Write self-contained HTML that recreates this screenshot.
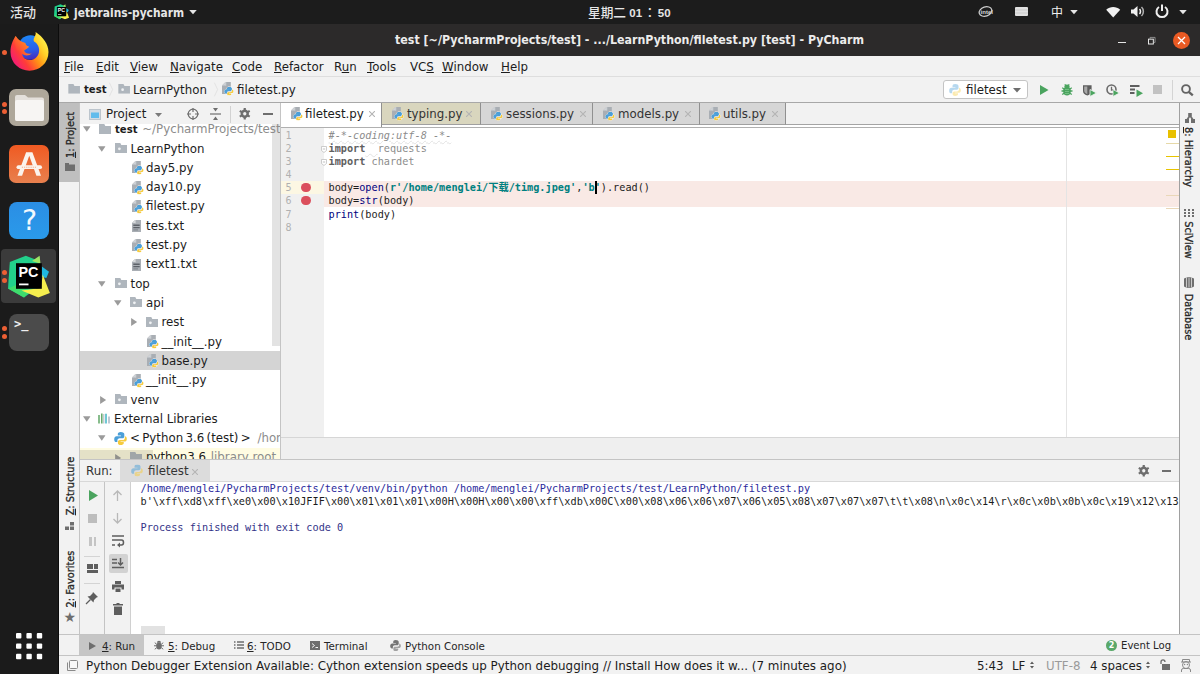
<!DOCTYPE html>
<html><head><meta charset="utf-8"><title>test - PyCharm</title>
<style>
*{box-sizing:border-box;margin:0;padding:0}
html,body{width:1200px;height:674px;overflow:hidden;background:#f2f2f2}
body{position:relative;font-family:"DejaVu Sans","Noto Sans CJK SC",sans-serif;font-size:11.800px;color:#1c1c1c}
div,span,svg{position:absolute}
.t{white-space:nowrap;line-height:16px;height:16px}
.mono{font-family:"DejaVu Sans Mono","Noto Sans CJK SC",monospace;font-size:10.215px;white-space:pre;line-height:13px;height:13px}
.u{text-decoration:underline;text-underline-offset:1px;position:static}
.s{position:static}
svg{overflow:visible}
.g{color:#8c8c8c}
.bc{font-family:'DejaVu Sans Condensed','Liberation Sans',sans-serif;font-weight:bold;font-size:11.200px}
</style></head><body>
<svg width="0" height="0" style="left:0;top:0"><defs>
<symbol id="pylogo" viewBox="2.900 3.600 9.100 9.400"><path d="M7.600 3.600c-1.600 0-2.100.7-2.100 1.600v1h2.300v.4H4.600c-1 0-1.700.8-1.700 2.200 0 1.400.6 2.100 1.500 2.100h.8v-1.200c0-.9.700-1.600 1.600-1.600h2.100c.7 0 1.300-.6 1.300-1.300V5.200c0-.9-.9-1.600-2.600-1.600z" fill="#4b9fd8"/><path d="M10.600 6.600v1.100c0 .9-.7 1.700-1.600 1.700H6.900c-.7 0-1.300.6-1.300 1.300v1c0 .9.800 1.300 1.900 1.300 1.300 0 2.300-.4 2.300-1.300v-.9H7.500v-.4h3.300c.8 0 1.200-.8 1.200-1.900 0-1.100-.5-1.900-1.400-1.900z" fill="#f6cb3c"/></symbol>
<symbol id="py" viewBox="0 0 12 13.500"><path d="M0 3.500L3.500 0H8.800V12H0Z" fill="#a9aeb4"/><path d="M0 3.500L3.500 0V3.500Z" fill="#d0d3d7"/><path d="M3.800 0V3.800" stroke="#e8eaec" stroke-width=".5"/><g transform="translate(2.600 4.900) scale(.967 .904) translate(-2.900 -3.600)"><path d="M7.600 3.600c-1.600 0-2.100.7-2.100 1.600v1h2.300v.4H4.600c-1 0-1.700.8-1.700 2.200 0 1.400.6 2.100 1.500 2.100h.8v-1.200c0-.9.700-1.600 1.600-1.600h2.100c.7 0 1.300-.6 1.300-1.300V5.200c0-.9-.9-1.600-2.600-1.600z" fill="#4b9fd8" stroke="#fff" stroke-width=".9" paint-order="stroke"/><path d="M10.600 6.600v1.100c0 .9-.7 1.700-1.600 1.700H6.900c-.7 0-1.300.6-1.300 1.300v1c0 .9.800 1.300 1.900 1.300 1.300 0 2.300-.4 2.300-1.300v-.9H7.500v-.4h3.300c.8 0 1.200-.8 1.200-1.900 0-1.100-.5-1.900-1.400-1.900z" fill="#f6cb3c" stroke="#fff" stroke-width=".9" paint-order="stroke"/><path d="M7.600 3.600c-1.600 0-2.100.7-2.100 1.600v1h2.300v.4H4.600c-1 0-1.700.8-1.700 2.200 0 1.400.6 2.100 1.500 2.100h.8v-1.200c0-.9.700-1.600 1.600-1.600h2.100c.7 0 1.300-.6 1.300-1.300V5.200c0-.9-.9-1.600-2.600-1.600z" fill="#4b9fd8"/></g></symbol>
<symbol id="fold" viewBox="0 0 12 10"><path d="M0 0H5.300L6.300 2H12V10H0Z" fill="#afb6bd"/></symbol>
<symbol id="foldp" viewBox="0 0 12 10"><path d="M0 0H5.300L6.300 2H12V10H0Z" fill="#afb6bd"/><circle cx="4.400" cy="5.800" r="1.400" fill="#f0f2f4"/></symbol>
<symbol id="pc" viewBox="0 0 43 43"><path d="M1.800 6.900L17.800 .7L31.200 6L33 30L16 42.500L0 33.600Z" fill="#22d08b"/><path d="M0 33.600L16 42.500L22 36L8 30Z" fill="#3fdc6c"/><path d="M24 6L31.600 .7L32.500 8.700Z" fill="#9fe566"/><path d="M33.800 11.400L41 16.700L38.300 23L33.800 22Z" fill="#1fb8e0"/><path d="M34.700 19.400L41.900 38L30.300 42.500L13.400 35.400L33 33Z" fill="#f5ee4e"/><rect x="8" y="8.200" width="25.800" height="25.600" fill="#000"/><text x="10.500" y="22" font-size="14" font-weight="bold" fill="#fff" font-family="Liberation Sans,sans-serif" textLength="20" lengthAdjust="spacingAndGlyphs">PC</text><rect x="11" y="28.500" width="9.500" height="1.800" fill="#fff"/></symbol>
<symbol id="txt" viewBox="0 0 9 12"><path d="M0 3L3 0H9V12H0Z" fill="#a9aeb4"/><path d="M0 3L3 0V3Z" fill="#d4d7da"/><path d="M3.300 0V3.300" stroke="#f0f1f2" stroke-width=".5"/><path d="M1.300 5.300H7.700M1.300 7.600H7.700" stroke="#5c6168" stroke-width="1.400"/><path d="M1.300 9.900H6" stroke="#7c8187" stroke-width="1"/></symbol>
<symbol id="ad" viewBox="0 0 8 6"><path d="M0 0H8L4 6Z" fill="#9b9b9b"/></symbol>
<symbol id="ar" viewBox="0 0 6 8"><path d="M0 0V8L6 4Z" fill="#9b9b9b"/></symbol>
<symbol id="x" viewBox="0 0 6 6"><path d="M0 0L6 6M6 0L0 6" stroke="#b4b4b4" stroke-width="1.100"/></symbol>
</defs></svg>
<div id="topbar" style="left:0;top:0;width:1200px;height:24px;background:#1c1c1c;color:#e6e6e6">
<span class="t" style="left:10px;top:4.500px;font-size:13px;font-weight:500">活动</span>
<svg style="left:54px;top:3.600px" width="15.500" height="15.500"><use href="#pc" width="15.500" height="15.500"/></svg>
<span class="t bc" style="left:74px;top:4.800px;font-size:11.850px;color:#e6e6e6">jetbrains-pycharm</span>
<svg style="left:189px;top:10px" width="8" height="4.200" viewBox="0 0 9 5"><path d="M0 0H9L4.500 5Z" fill="#e6e6e6"/></svg>
<span class="t" style="left:588px;top:4.500px;font-size:12.700px;font-weight:500;color:#e6e6e6;font-family:Liberation Sans,Noto Sans CJK JP,sans-serif">星期二<span class="s" style="font-size:11.500px;font-weight:bold"> 01</span><span class="s" style="font-size:12.700px;margin:0 1.500px">：</span><span class="s" style="font-size:11.500px;font-weight:bold">50</span></span>
<svg style="left:978px;top:5px" width="15" height="13" viewBox="0 0 15 13"><ellipse cx="7.500" cy="6.500" rx="6.500" ry="4.600" fill="none" stroke="#cfcfcf" stroke-width="1.200" transform="rotate(-18 7.500 6.500)"/><text x="2.600" y="8.800" font-size="6" font-weight="bold" fill="#d8d8d8" font-family="Liberation Sans,sans-serif">intel</text></svg>
<svg style="left:1015px;top:7px" width="13" height="9" viewBox="0 0 13 9"><rect width="13" height="9" rx="1" fill="#e0e0e0"/><path d="M0 3H13M0 6H13" stroke="#bdbdbd" stroke-width=".6"/></svg>
<span class="t" style="left:1051px;top:4.500px;font-size:12px;color:#f0f0f0">中</span>
<svg style="left:1069.500px;top:9.500px" width="8" height="4.200" viewBox="0 0 9 5"><path d="M0 0H9L4.500 5Z" fill="#e6e6e6"/></svg>
<svg style="left:1106px;top:7px" width="14.400" height="10.500" viewBox="0 0 16 12"><path d="M0 3.200C4.500 -1 11.500 -1 16 3.200L8 12Z" fill="#f0f0f0"/></svg>
<svg style="left:1131px;top:5px" width="14" height="13" viewBox="0 0 14 13"><path d="M0 4.500H2.500L6.500 1V12L2.500 8.500H0Z" fill="#f0f0f0"/><path d="M8.500 4C9.800 5.200 9.800 7.800 8.500 9" stroke="#f0f0f0" stroke-width="1.600" fill="none"/><path d="M10.500 2C13 4.300 13 8.700 10.500 11" stroke="#b0b0b0" stroke-width="1.500" fill="none"/></svg>
<svg style="left:1155px;top:4px" width="14" height="14" viewBox="0 0 14 14"><path d="M4 3A5.500 5.500 0 1 0 10 3" stroke="#f0f0f0" stroke-width="2" fill="none"/><path d="M7 0.500V7" stroke="#f0f0f0" stroke-width="2"/></svg>
<svg style="left:1178.500px;top:9.500px" width="8" height="4.200" viewBox="0 0 9 5"><path d="M0 0H9L4.500 5Z" fill="#e6e6e6"/></svg>
</div>
<div id="dock" style="left:0;top:24px;width:59px;height:650px;background:#1b1b1b;border-right:1px solid #0c0c0c">
<svg style="left:9.500px;top:8.300px" width="39" height="39" viewBox="0 0 39 39"><defs><linearGradient id="ffg" x1="92%" y1="15%" x2="8%" y2="72%"><stop offset="0" stop-color="#fff44f"/><stop offset=".25" stop-color="#ffd028"/><stop offset=".5" stop-color="#ff9216"/><stop offset=".78" stop-color="#ff3d38"/><stop offset="1" stop-color="#f5206e"/></linearGradient><linearGradient id="ffb" x1="40%" y1="0" x2="60%" y2="100%"><stop offset="0" stop-color="#1d86f5"/><stop offset=".6" stop-color="#2a5ee8"/><stop offset="1" stop-color="#4a28b8"/></linearGradient><linearGradient id="ffh" x1="100%" y1="0" x2="0" y2="100%"><stop offset="0" stop-color="#ffa01e"/><stop offset="1" stop-color="#ff3b3b"/></linearGradient></defs><circle cx="20.500" cy="15.500" r="12.300" fill="url(#ffb)"/><path d="M5.600 4C3 8 .5 13 .5 20A19 18.800 0 0 0 38.500 20C38.500 12 33 5 25.600 0C26.500 4 22.500 6 24 9.500C27.500 11.500 29.800 15.500 29 20C28.200 25 24 28.500 19 28C15 27.500 12.500 25 12.200 22C15 24 19 24 21.800 21.500C18 22.500 14.800 21 14 18.500C15.500 17 17.800 16.500 19 14.800C17 14.500 15.500 13 15.200 11C12 10.500 8.500 8.500 5.600 4Z" fill="url(#ffg)"/><path d="M5.600 4C8.500 8.500 12 10.500 15.200 11C15.500 13 17 14.500 19 14.800C17.800 16.500 15.500 17 14 18.500C12 17 9 17 7 19C5 15 5 8 5.600 4Z" fill="url(#ffh)" opacity=".85"/></svg>
<div style="left:1.700px;top:25.5px;width:5px;height:5px;border-radius:50%;background:#ec5f34"></div>
<div style="left:8.700px;top:65.200px;width:40.400px;height:37px;border-radius:7px;background:#aea79a"></div>
<svg style="left:14.500px;top:71px" width="29" height="26" viewBox="0 0 29 26"><path d="M2 0H10L13 2.500H27Q29 2.500 29 4.500V24Q29 26 27 26H2Q0 26 0 24V2Q0 0 2 0Z" fill="#e4e0db"/><path d="M0 7Q0 5 2 5H27Q29 5 29 7V24Q29 26 27 26H2Q0 26 0 24Z" fill="#f7f5f3"/></svg>
<div style="left:1.700px;top:77.5px;width:5px;height:5px;border-radius:50%;background:#ec5f34"></div>
<div style="left:1.700px;top:84.5px;width:5px;height:5px;border-radius:50%;background:#ec5f34"></div>
<div style="left:8.800px;top:121.300px;width:40.200px;height:37.700px;border-radius:7px;background:linear-gradient(#f05a22,#e8804e)"></div>
<svg style="left:15.800px;top:126px" width="26.500" height="27" viewBox="0 0 27 27"><path d="M10.300 2H16.700L25.500 26H20.800L13.500 5.500L6.200 26H1.500Z" fill="#fbf3ec"/><rect x=".5" y="15.200" width="26" height="4" rx="2" fill="#fbf3ec"/><path d="M6 17.300H21" stroke="#ef8a5c" stroke-width=".7" stroke-dasharray="1.200 1"/></svg>
<div style="left:9px;top:177.800px;width:40px;height:37.300px;border-radius:8px;background:linear-gradient(#2b8ee4,#2a9aea)"></div>
<span class="t" style="left:9.500px;top:180.500px;width:40px;text-align:center;font-size:28.500px;line-height:32px;height:32px;color:#f2f8fd">?</span>
<div style="left:1px;top:225px;width:55px;height:54px;border-radius:4px;background:#3b3b3b"></div>
<svg style="left:8px;top:231px" width="43" height="43"><use href="#pc" width="43" height="43"/></svg>
<div style="left:1.700px;top:245.5px;width:5px;height:5px;border-radius:50%;background:#ec5f34"></div>
<div style="left:1.700px;top:253.5px;width:5px;height:5px;border-radius:50%;background:#ec5f34"></div>
<div style="left:9px;top:290px;width:40px;height:37px;border-radius:8px;background:#4b4b4b"></div>
<span class="t" style="left:14px;top:291.800px;font-size:12px;font-weight:bold;color:#f0f0f0;font-family:'DejaVu Sans Mono',monospace">&gt;_</span>
<div style="left:1.700px;top:301.5px;width:5px;height:5px;border-radius:50%;background:#ec5f34"></div>
<div style="left:1.700px;top:309.5px;width:5px;height:5px;border-radius:50%;background:#ec5f34"></div>
<svg style="left:16px;top:609.200px" width="27" height="27" viewBox="0 0 27 27"><rect x="0.0" y="0.0" width="5.400" height="5.400" rx="1" fill="#fff"/><rect x="10.4" y="0.0" width="5.400" height="5.400" rx="1" fill="#fff"/><rect x="20.8" y="0.0" width="5.400" height="5.400" rx="1" fill="#fff"/><rect x="0.0" y="10.4" width="5.400" height="5.400" rx="1" fill="#fff"/><rect x="10.4" y="10.4" width="5.400" height="5.400" rx="1" fill="#fff"/><rect x="20.8" y="10.4" width="5.400" height="5.400" rx="1" fill="#fff"/><rect x="0.0" y="20.8" width="5.400" height="5.400" rx="1" fill="#fff"/><rect x="10.4" y="20.8" width="5.400" height="5.400" rx="1" fill="#fff"/><rect x="20.8" y="20.8" width="5.400" height="5.400" rx="1" fill="#fff"/></svg>
</div>
<div id="title" style="left:59px;top:24px;width:1141px;height:32px;background:#2c2a2a;color:#f0f0f0">
<span class="t bc" style="left:0;top:8px;width:1141px;text-align:center;font-size:12.300px;color:#ececec">test [~/PycharmProjects/test] - .../LearnPython/filetest.py [test] - PyCharm</span>
<div style="left:1059px;top:17.500px;width:8px;height:1.500px;background:#e6e6e6"></div>
<svg style="left:1088.500px;top:12.500px" width="7.500" height="7.500" viewBox="0 0 9 9"><path d="M2.500 2V.5H8.500V6.500H7" stroke="#9a9a9a" fill="none" stroke-width="1"/><rect x=".6" y="2.600" width="5.800" height="5.800" stroke="#e6e6e6" fill="none" stroke-width="1.200"/></svg>
<div style="left:1114px;top:8px;width:17px;height:17px;border-radius:50%;background:#ea5a23"></div>
<svg style="left:1119px;top:13px" width="7" height="7" viewBox="0 0 7 7"><path d="M0 0L7 7M7 0L0 7" stroke="#fff" stroke-width="1.300"/></svg>
</div>
<div id="menubar" style="left:59px;top:56px;width:1141px;height:20px;background:#f2f2f2">
<span class="t" style="left:5px;top:2.800px;font-size:11.800px"><span class="u">F</span>ile</span><span class="t" style="left:37px;top:2.800px;font-size:11.800px"><span class="u">E</span>dit</span><span class="t" style="left:71px;top:2.800px;font-size:11.800px"><span class="u">V</span>iew</span><span class="t" style="left:111px;top:2.800px;font-size:11.800px"><span class="u">N</span>avigate</span><span class="t" style="left:173px;top:2.800px;font-size:11.800px"><span class="u">C</span>ode</span><span class="t" style="left:215px;top:2.800px;font-size:11.800px"><span class="u">R</span>efactor</span><span class="t" style="left:275px;top:2.800px;font-size:11.800px">R<span class="u">u</span>n</span><span class="t" style="left:308px;top:2.800px;font-size:11.800px"><span class="u">T</span>ools</span><span class="t" style="left:351px;top:2.800px;font-size:11.800px">VC<span class="u">S</span></span><span class="t" style="left:383px;top:2.800px;font-size:11.800px"><span class="u">W</span>indow</span><span class="t" style="left:442px;top:2.800px;font-size:11.800px"><span class="u">H</span>elp</span>
</div>
<div id="navbar" style="left:59px;top:76px;width:1141px;height:27px;background:#f2f2f2;border-top:1px solid #dedede;border-bottom:1px solid #a8a8a8">
<svg style="left:8.7px;top:7.3px" width="12.3" height="9.7" ><use href="#fold" width="12.3" height="9.7"/></svg><span class="t bc" style="left:25px;top:4.800px">test</span><svg style="left:50px;top:5px" width="4" height="15" viewBox="0 0 5 17"><path d="M.5 0L4.500 8.500L.5 17" stroke="#dedede" fill="none"/></svg><svg style="left:58.7px;top:7.3px" width="12.3" height="9.7" ><use href="#foldp" width="12.3" height="9.7"/></svg><span class="t" style="left:74px;top:4.800px">LearnPython</span><svg style="left:154.500px;top:5px" width="4" height="15" viewBox="0 0 5 17"><path d="M.5 0L4.500 8.500L.5 17" stroke="#dedede" fill="none"/></svg><svg style="left:163px;top:5px" width="12" height="13.5" ><use href="#py" width="12" height="13.5"/></svg><span class="t" style="left:178px;top:4.800px">filetest.py</span><div style="left:883.500px;top:3px;width:85px;height:19px;background:#fff;border:1px solid #c4c4c4;border-radius:3px"></div><svg style="left:889.500px;top:7px;opacity:.4" width="12" height="12" viewBox="0 0 12 12"><use href="#pylogo" width="12" height="12"/></svg><span class="t" style="left:907px;top:4.500px">filetest</span><svg style="left:954px;top:10.500px" width="8" height="4.500" viewBox="0 0 8 4.500"><path d="M0 0H8L4 4.500Z" fill="#6e6e6e"/></svg><svg style="left:981px;top:7.500px" width="8.500" height="10" viewBox="0 0 8.500 10"><path d="M0 0L8.500 5L0 10Z" fill="#4ba45f"/></svg><svg style="left:1001.500px;top:6.500px" width="12" height="11.500" viewBox="0 0 12 11.500"><ellipse cx="6" cy="7" rx="3.900" ry="4.500" fill="#4ba45f"/><path d="M3.300 3.200A2.700 2.700 0 0 1 8.700 3.200Z" fill="#4ba45f"/><path d="M.5 7H11.500M1.200 3.800L3.500 5.200M10.800 3.800L8.500 5.200M1.200 10.500L3.500 9M10.800 10.500L8.500 9M3.800 .3L4.800 1.600M8.200 .3L7.200 1.600" stroke="#4ba45f" stroke-width="1.300"/><path d="M4 5.500H8M4 7.500H8M4 9.500H8" stroke="#8fd09c" stroke-width=".6"/></svg><svg style="left:1024px;top:7.500px" width="14" height="12" viewBox="0 0 14 12"><path d="M0 .3H8.600V6Q8.600 9 4.300 10.500Q0 9 0 6Z" fill="#5e5e5e"/><path d="M4.300 1.500V9.200Q1.200 8 1.200 6V1.500Z" fill="#a8a8a8"/><path d="M7 4.500L13.500 8L7 11.500Z" fill="#4ba45f" stroke="#f2f2f2" stroke-width=".8"/></svg><svg style="left:1046.500px;top:6.500px" width="14" height="13" viewBox="0 0 14 13"><circle cx="5.500" cy="5.500" r="4.500" fill="none" stroke="#6a6a6a" stroke-width="1.600"/><path d="M5.500 2.800V6H7.500" stroke="#6a6a6a" fill="none" stroke-width="1.300"/><path d="M7 5.500L13.500 9L7 12.500Z" fill="#4ba45f" stroke="#f2f2f2" stroke-width=".8"/></svg><svg style="left:1071px;top:7.500px" width="13" height="12" viewBox="0 0 13 12"><path d="M0 1H9.500M0 4.500H5M0 8H4.500" stroke="#5e5e5e" stroke-width="1.800"/><path d="M6.500 4.500L13 8.200L6.500 12Z" fill="#4ba45f"/></svg><div style="left:1094px;top:8px;width:9px;height:8.500px;background:#c2c2c2"></div><div style="left:1113px;top:3px;width:1px;height:20px;background:#d4d4d4"></div><svg style="left:1121.500px;top:6.500px" width="12.500" height="12" viewBox="0 0 12.500 12"><circle cx="5" cy="5" r="3.900" fill="none" stroke="#646464" stroke-width="1.900"/><path d="M7.800 7.800L11.800 11.300" stroke="#646464" stroke-width="2.300"/></svg>
</div>
<div id="lstrip" style="left:59px;top:103px;width:21px;height:531px;background:#f2f2f2;border-right:1px solid #c4c4c4">
<div style="left:0;top:0;width:20px;height:79px;background:#bfbfbf"></div><span class="t" style="left:-11.500px;top:23.500px;width:46px;text-align:center;transform:rotate(-90deg);font-size:9.800px;color:#262626;-webkit-text-stroke:.3px #262626"><span class="u">1</span>: Project</span><svg style="left:5.500px;top:60px" width="10" height="8" viewBox="0 0 10 8"><path d="M0 0H4V1.500H10V8H0Z" fill="#6e6e6e"/></svg><span class="t" style="left:-22.500px;top:375px;width:68px;text-align:center;transform:rotate(-90deg);font-size:9.800px;color:#262626;-webkit-text-stroke:.3px #262626"><span class="u">Z</span>: Structure</span><svg style="left:6px;top:419px" width="9" height="8" viewBox="0 0 9 8"><path d="M5 0H9V3.500H5ZM0 4.500H4V8H0ZM5 4.500H9V8H5Z" fill="#6e6e6e"/></svg><span class="t" style="left:-22.500px;top:468px;width:68px;text-align:center;transform:rotate(-90deg);font-size:9.800px;color:#262626;-webkit-text-stroke:.3px #262626"><span class="u">2</span>: Favorites</span><span class="t" style="left:4.500px;top:506px;font-size:14px;color:#6e6e6e;font-family:'DejaVu Sans',sans-serif">★</span>
</div>
<div id="proj" style="left:80px;top:103px;width:200px;height:356px;background:#fff;overflow:hidden">
<div style="left:191.500px;top:21px;width:8.500px;height:221.500px;background:#e3e3e3"></div><svg style="left:2.8px;top:23.30px" width="7.6" height="6" ><use href="#ad" width="7.6" height="6"/></svg><svg style="left:19.0px;top:20.70px" width="12" height="10" ><use href="#fold" width="12" height="10"/></svg><span class="t" style="left:35.0px;top:18.20px"><b class="s bc">test</b> <span class="s g" style="margin-left:1px">~/PycharmProjects/test</span></span>
<svg style="left:18.3px;top:42.61px" width="7.6" height="6" ><use href="#ad" width="7.6" height="6"/></svg><svg style="left:34.5px;top:40.01px" width="12" height="10" ><use href="#foldp" width="12" height="10"/></svg><span class="t" style="left:50.5px;top:37.51px">LearnPython</span>
<svg style="left:51.5px;top:58.32px" width="12" height="13.5" ><use href="#py" width="12" height="13.5"/></svg><span class="t" style="left:66.0px;top:56.82px">day5.py</span>
<svg style="left:51.5px;top:77.63px" width="12" height="13.5" ><use href="#py" width="12" height="13.5"/></svg><span class="t" style="left:66.0px;top:76.13px">day10.py</span>
<svg style="left:51.5px;top:96.94px" width="12" height="13.5" ><use href="#py" width="12" height="13.5"/></svg><span class="t" style="left:66.0px;top:95.44px">filetest.py</span>
<svg style="left:52.0px;top:117.05px" width="9" height="12" ><use href="#txt" width="9" height="12"/></svg><span class="t" style="left:66.0px;top:114.75px">tes.txt</span>
<svg style="left:51.5px;top:135.56px" width="12" height="13.5" ><use href="#py" width="12" height="13.5"/></svg><span class="t" style="left:66.0px;top:134.06px">test.py</span>
<svg style="left:52.0px;top:155.67px" width="9" height="12" ><use href="#txt" width="9" height="12"/></svg><span class="t" style="left:66.0px;top:153.37px">text1.txt</span>
<svg style="left:18.3px;top:177.78px" width="7.6" height="6" ><use href="#ad" width="7.6" height="6"/></svg><svg style="left:34.5px;top:175.18px" width="12" height="10" ><use href="#foldp" width="12" height="10"/></svg><span class="t" style="left:50.5px;top:172.68px">top</span>
<svg style="left:33.8px;top:197.09px" width="7.6" height="6" ><use href="#ad" width="7.6" height="6"/></svg><svg style="left:50.0px;top:194.49px" width="12" height="10" ><use href="#foldp" width="12" height="10"/></svg><span class="t" style="left:66.0px;top:191.99px">api</span>
<svg style="left:50.8px;top:215.40px" width="6.2" height="8" ><use href="#ar" width="6.2" height="8"/></svg><svg style="left:65.5px;top:213.80px" width="12" height="10" ><use href="#foldp" width="12" height="10"/></svg><span class="t" style="left:81.5px;top:211.30px">rest</span>
<svg style="left:67.0px;top:232.11px" width="12" height="13.5" ><use href="#py" width="12" height="13.5"/></svg><span class="t" style="left:81.5px;top:230.61px">__init__.py</span>
<div style="left:0;top:248.42px;width:200px;height:18.600px;background:#d4d4d4"></div><svg style="left:67.0px;top:251.42px" width="12" height="13.5" ><use href="#py" width="12" height="13.5"/></svg><span class="t" style="left:81.5px;top:249.92px">base.py</span>
<svg style="left:51.5px;top:270.73px" width="12" height="13.5" ><use href="#py" width="12" height="13.5"/></svg><span class="t" style="left:66.0px;top:269.23px">__init__.py</span>
<svg style="left:19.8px;top:292.64px" width="6.2" height="8" ><use href="#ar" width="6.2" height="8"/></svg><svg style="left:34.5px;top:291.04px" width="12" height="10" ><use href="#foldp" width="12" height="10"/></svg><span class="t" style="left:50.5px;top:288.54px">venv</span>
<svg style="left:2.8px;top:312.95px" width="7.6" height="6" ><use href="#ad" width="7.6" height="6"/></svg><svg style="left:18.0px;top:310.15px" width="12.500" height="10.500" viewBox="0 0 12.500 10.500"><path d="M1 2V10.500M3.800 .5V10.500" stroke="#62a868" stroke-width="1.500"/><path d="M5.800 1V10.500" stroke="#9aa7b0" stroke-width=".8"/><path d="M8 .8V10.500" stroke="#40b6c6" stroke-width="1.500"/><path d="M11 3.500V10.500" stroke="#a9b7c6" stroke-width="1.500"/></svg><span class="t" style="left:34.0px;top:307.85px">External Libraries</span>
<svg style="left:18.3px;top:332.26px" width="7.6" height="6" ><use href="#ad" width="7.6" height="6"/></svg><svg style="left:34.0px;top:328.96px" width="13" height="13" viewBox="0 0 12 12"><use href="#pylogo" width="12" height="12"/></svg><span class="t" style="left:50.0px;top:327.16px"><span class="s" style="word-spacing:-1.400px">&lt; Python 3.6 (test) &gt;</span> <span class="s g" style="margin-left:3px">/home/menglei/PycharmProjects</span></span>
<div style="left:0;top:345.27px;width:200px;height:20px;background:#fffce2"></div><svg style="left:35.3px;top:350.57px" width="6.2" height="8" ><use href="#ar" width="6.2" height="8"/></svg><svg style="left:50.0px;top:348.97px" width="12" height="10" ><use href="#fold" width="12" height="10"/></svg><span class="t" style="left:66.0px;top:346.47px">python3.6 <span class="s g" style="margin-left:1px">library root</span></span>
<div style="left:0;top:347px;width:73px;height:9px;background:rgba(90,90,60,.16)"></div><div style="left:0;top:0;width:200px;height:21px;background:#f2f2f2"></div><svg style="left:9px;top:5.500px" width="12" height="11" viewBox="0 0 12 11"><rect x=".5" y=".5" width="11" height="10" fill="#d3dce4" stroke="#bcc5cd"/><rect x="2" y="3.500" width="8" height="5.500" fill="#62bcec"/></svg><span class="t" style="left:26px;top:3px">Project</span><svg style="left:75px;top:9.500px" width="7" height="4" viewBox="0 0 7 4"><path d="M0 0H7L3.500 4Z" fill="#7a7a7a"/></svg><svg style="left:107px;top:5px" width="12" height="12" viewBox="0 0 12 12"><circle cx="6" cy="6" r="4.800" fill="none" stroke="#6e6e6e" stroke-width="1.200"/><path d="M6 0V4M6 8V12M0 6H4M8 6H12" stroke="#6e6e6e" stroke-width="1.200"/></svg><svg style="left:130px;top:5px" width="11" height="12" viewBox="0 0 11 12"><path d="M0 6H11" stroke="#6e6e6e" stroke-width="1.200"/><path d="M3 0H8L5.500 3.500ZM3 12H8L5.500 8.500Z" fill="#6e6e6e"/></svg><div style="left:150px;top:3px;width:1px;height:17px;background:#d2d2d2"></div><svg style="left:158.500px;top:4.500px" width="11.500" height="11.500" viewBox="0 0 12 12"><circle cx="6" cy="6" r="3.300" fill="none" stroke="#6e6e6e" stroke-width="2.200"/><path d="M6 0V12M.8 3L11.200 9M11.200 3L.8 9" stroke="#6e6e6e" stroke-width="2.300"/><circle cx="6" cy="6" r="1.700" fill="#f2f2f2"/></svg><div style="left:183px;top:10px;width:9.500px;height:2px;background:#6e6e6e"></div>
</div>
<div style="left:280px;top:103px;width:1px;height:356px;background:#c4c4c4"></div>
<div id="tabs" style="left:281px;top:103px;width:899px;height:25px;background:#f2f2f2">
<div style="left:0;top:21px;width:899px;height:3.500px;background:#fff;border-top:1px solid #a4a4a4"></div><div style="left:0;top:24px;width:899px;height:1px;background:#b0b0b0"></div><div style="left:0px;top:0;width:101.4px;height:24px;background:#fff;border-right:1px solid #909090;"></div><svg style="left:10px;top:4px" width="12" height="13.5" ><use href="#py" width="12" height="13.5"/></svg><span class="t" style="left:24px;top:2.800px;">filetest.py</span><svg style="left:88px;top:8px" width="6" height="6" ><use href="#x" width="6" height="6"/></svg><div style="left:101.4px;top:0;width:98.6px;height:22px;background:#d9d6be;border-right:1px solid #909090;border-bottom:1px solid #a0a0a0;"></div><svg style="left:111.4px;top:4px" width="12" height="13.5" ><use href="#py" width="12" height="13.5"/></svg><span class="t" style="left:125.9px;top:2.800px;color:#333">typing.py</span><svg style="left:185.4px;top:8px" width="6" height="6" ><use href="#x" width="6" height="6"/></svg><div style="left:200px;top:0;width:112px;height:22px;background:#d6d6d6;border-right:1px solid #909090;border-bottom:1px solid #a0a0a0;"></div><svg style="left:210px;top:4px" width="12" height="13.5" ><use href="#py" width="12" height="13.5"/></svg><span class="t" style="left:225px;top:2.800px;color:#333">sessions.py</span><svg style="left:299px;top:8px" width="6" height="6" ><use href="#x" width="6" height="6"/></svg><div style="left:312px;top:0;width:106.5px;height:22px;background:#d6d6d6;border-right:1px solid #909090;border-bottom:1px solid #a0a0a0;"></div><svg style="left:322px;top:4px" width="12" height="13.5" ><use href="#py" width="12" height="13.5"/></svg><span class="t" style="left:337px;top:2.800px;color:#333">models.py</span><svg style="left:403.5px;top:8px" width="6" height="6" ><use href="#x" width="6" height="6"/></svg><div style="left:418.5px;top:0;width:86.5px;height:22px;background:#d6d6d6;border-right:1px solid #909090;border-bottom:1px solid #a0a0a0;"></div><svg style="left:428.0px;top:4px" width="12" height="13.5" ><use href="#py" width="12" height="13.5"/></svg><span class="t" style="left:442.0px;top:2.800px;color:#333">utils.py</span><svg style="left:490.5px;top:8px" width="6" height="6" ><use href="#x" width="6" height="6"/></svg>
</div>
<div id="editor" style="left:281px;top:128px;width:899px;height:309px;background:#fff;overflow:hidden">
<div style="left:0;top:0;width:42.500px;height:309px;background:#f0f0f0"></div><div style="left:0;top:53.30px;width:42.500px;height:13.1px;background:#fcf7e3"></div><div style="left:42.500px;top:53.30px;width:857px;height:26.20px;background:#f9e9e5"></div><div style="left:785px;top:0;width:1px;height:309px;background:#e4e4e4"></div><span class="mono" style="left:4.500px;top:0.90px;color:#b0b0b0;font-size:10px">1</span><span class="mono" style="left:4.500px;top:14.00px;color:#b0b0b0;font-size:10px">2</span><span class="mono" style="left:4.500px;top:27.10px;color:#b0b0b0;font-size:10px">3</span><span class="mono" style="left:4.500px;top:40.20px;color:#b0b0b0;font-size:10px">4</span><span class="mono" style="left:4.500px;top:53.30px;color:#b0b0b0;font-size:10px">5</span><span class="mono" style="left:4.500px;top:66.40px;color:#b0b0b0;font-size:10px">6</span><span class="mono" style="left:4.500px;top:79.50px;color:#b0b0b0;font-size:10px">7</span><span class="mono" style="left:4.500px;top:92.60px;color:#b0b0b0;font-size:10px">8</span><div style="left:20px;top:54.80px;width:9.600px;height:9.600px;border-radius:50%;background:#db4f5c"></div><div style="left:20px;top:67.90px;width:9.600px;height:9.600px;border-radius:50%;background:#db4f5c"></div><svg style="left:39.500px;top:17.50px" width="6" height="7" viewBox="0 0 6 7"><path d="M.5 .5H5.500V4.500L3 6.500L.5 4.500Z" fill="#fff" stroke="#c0c0c0" stroke-width=".8"/><path d="M1.800 3H4.200" stroke="#b0b0b0" stroke-width=".8"/></svg><svg style="left:39.500px;top:30.60px" width="6" height="7" viewBox="0 0 6 7"><path d="M.5 .5H5.500V4.500L3 6.500L.5 4.500Z" fill="#fff" stroke="#c0c0c0" stroke-width=".8"/><path d="M1.800 3H4.200" stroke="#b0b0b0" stroke-width=".8"/></svg><span class="mono" style="left:47.500px;top:0.90px;color:#1c1c1c"><span class="s" style="color:#8c8c8c;font-style:italic;text-decoration:underline wavy #e2e2e2 .5px;text-underline-offset:.5px">#-*-coding:utf-8 -*-</span></span>
<span class="mono" style="left:47.500px;top:14.00px;color:#1c1c1c"><b class="s" style="color:#606060">import</b><span class="s" style="color:#8c8c8c"><span class="s" style="text-decoration:underline wavy #e2e2e2 .5px;text-underline-offset:.5px">  </span>requests</span></span>
<span class="mono" style="left:47.500px;top:27.10px;color:#1c1c1c"><b class="s" style="color:#606060">import</b><span class="s" style="color:#8c8c8c"> chardet</span></span>
<span class="mono" style="left:47.500px;top:53.30px;color:#1c1c1c">body=<span class="s" style="color:#000080">open</span>(<b class="s" style="color:#008080">r'/home/menglei/下载/timg.jpeg'</b>,<b class="s" style="color:#008080">'b'</b>).read()</span>
<span class="mono" style="left:47.500px;top:66.40px;color:#1c1c1c">body=<span class="s" style="color:#000080">str</span>(body)</span>
<span class="mono" style="left:47.500px;top:79.50px;color:#1c1c1c"><span class="s" style="color:#000080">print</span>(body)</span>
<div style="left:314px;top:53.30px;width:1.500px;height:13.1px;background:#000"></div><div style="left:887px;top:2px;width:8px;height:8px;background:#e8c000"></div><div style="left:885px;top:15px;width:13px;height:1px;background:#e6d9a8"></div><div style="left:885px;top:27.7px;width:13px;height:1.6px;background:#e8c400"></div><div style="left:885px;top:40.7px;width:13px;height:1.6px;background:#e8c400"></div><div style="left:885px;top:67px;width:13px;height:1px;background:#ead7b8"></div><div style="left:885px;top:80px;width:13px;height:1px;background:#ead7b8"></div>
</div>
<div style="left:281px;top:437px;width:899px;height:22px;background:#efefef;border-top:1px solid #d6d6d6"></div>

<div id="rstrip" style="left:1179px;top:103px;width:21px;height:531px;background:#f2f2f2;border-left:1px solid #a0a0a0">
<svg style="left:4.500px;top:9.500px" width="10" height="10" viewBox="0 0 10 10"><path d="M3.200 0H6.800V3.200H3.200ZM0 6H4V10H0ZM6 6H10V10H6Z" fill="#6e6e6e"/><path d="M5 2.500L2 7M5 2.500L8 7" stroke="#6e6e6e" stroke-width="1.800"/></svg><span class="t" style="left:-27.500px;top:46px;width:70px;text-align:center;transform:rotate(90deg);font-size:9.800px;color:#262626;-webkit-text-stroke:.3px #262626"><span class="u">8</span>: Hierarchy</span><svg style="left:4px;top:106px" width="10" height="8" viewBox="0 0 10 8"><path d="M0 0H2V2H0ZM4 0H6V2H4ZM8 0H10V2H8ZM0 3H2V5H0ZM4 3H6V5H4ZM8 3H10V5H8ZM0 6H2V8H0ZM4 6H6V8H4ZM8 6H10V8H8Z" fill="#6e6e6e"/></svg><span class="t" style="left:-27.500px;top:129px;width:70px;text-align:center;transform:rotate(90deg);font-size:9.800px;color:#262626;-webkit-text-stroke:.3px #262626">SciView</span><svg style="left:4px;top:174px" width="10" height="11" viewBox="0 0 10 11"><path d="M0 1.500Q5 -1.500 10 1.500V9.500Q5 12.500 0 9.500Z" fill="#6e6e6e"/><path d="M2.500 .5V10.500M5 .5V10.500M7.500 .5V10.500" stroke="#f2f2f2" stroke-width=".7"/></svg><span class="t" style="left:-27.500px;top:206px;width:70px;text-align:center;transform:rotate(90deg);font-size:9.800px;color:#262626;-webkit-text-stroke:.3px #262626">Database</span>
</div>
<div id="run" style="left:80px;top:459px;width:1099px;height:175px;background:#fff;border-top:1px solid #c4c4c4">
<div style="left:0;top:0;width:1099px;height:21.500px;background:#f2f2f2;border-bottom:1px solid #d8d8d8"></div><span class="t" style="left:6px;top:3px;color:#333">Run:</span><div style="left:40px;top:0;width:90px;height:21px;background:#dcdcdc"></div><svg style="left:51px;top:4px;opacity:.5" width="12" height="13" viewBox="0 0 12 12"><use href="#pylogo" width="12" height="12"/></svg><span class="t" style="left:68px;top:3px;color:#333">filetest</span><svg style="left:112px;top:8.5px" width="6" height="6" style="opacity:.7"><use href="#x" width="6" height="6"/></svg><svg style="left:1058px;top:5px" width="11.500" height="11.500" viewBox="0 0 12 12"><circle cx="6" cy="6" r="3.300" fill="none" stroke="#6e6e6e" stroke-width="2.200"/><path d="M6 0V12M.8 3L11.200 9M11.200 3L.8 9" stroke="#6e6e6e" stroke-width="2.300"/><circle cx="6" cy="6" r="1.700" fill="#f2f2f2"/></svg><div style="left:1082px;top:10px;width:9px;height:1.500px;background:#6e6e6e"></div><div style="left:0;top:21.500px;width:24.500px;height:153px;background:#f2f2f2;border-right:1px solid #c4c4c4"></div><div style="left:24.500px;top:21.500px;width:26.500px;height:153px;background:#f2f2f2;border-right:1px solid #d0d0d0"></div><svg style="left:8.500px;top:30px" width="9" height="11" viewBox="0 0 9 11"><path d="M0 0L9 5.500L0 11Z" fill="#4ba45f"/></svg><div style="left:8px;top:54px;width:9px;height:9px;background:#bdbdbd"></div><div style="left:9px;top:76.500px;width:2.500px;height:9.500px;background:#c4c4c4"></div><div style="left:13.500px;top:76.500px;width:2.500px;height:9.500px;background:#c4c4c4"></div><div style="left:4px;top:95.500px;width:16px;height:1px;background:#d4d4d4"></div><svg style="left:7px;top:104px" width="11" height="9" viewBox="0 0 11 9"><path d="M0 0H6V5H0ZM7 0H11V5H7ZM0 6H11V9H0Z" fill="#5e5e5e"/></svg><div style="left:4px;top:122.500px;width:16px;height:1px;background:#d4d4d4"></div><svg style="left:6px;top:132px" width="12" height="12" viewBox="0 0 12 12"><path d="M7 0L12 5L10.500 5.500L8 8L7.500 10.500L1.500 4.500L4 4L6.500 1.500Z" fill="#5e5e5e"/><path d="M4.500 7.500L0 12" stroke="#5e5e5e" stroke-width="1.300"/></svg><svg style="left:33px;top:29.500px" width="9" height="11" viewBox="0 0 9 11"><path d="M4.500 11V1M.5 5L4.500 1L8.500 5" stroke="#b8b8b8" stroke-width="1.300" fill="none"/></svg><svg style="left:33px;top:52.500px" width="9" height="11" viewBox="0 0 9 11"><path d="M4.500 0V10M.5 6L4.500 10L8.500 6" stroke="#b8b8b8" stroke-width="1.300" fill="none"/></svg><svg style="left:32px;top:75px" width="12" height="12" viewBox="0 0 12 12"><path d="M0 1H12M0 5H9.500Q11.500 5 11.500 7.500Q11.500 10 9.500 10H7M0 10H3" stroke="#5e5e5e" stroke-width="1.500" fill="none"/><path d="M8 7.500V12.500L5 10Z" fill="#5e5e5e"/></svg><div style="left:28.500px;top:94px;width:19px;height:19px;border-radius:2px;background:#d2d2d2"></div><svg style="left:32px;top:98px" width="12" height="11" viewBox="0 0 12 11"><path d="M0 1.500H5M0 5H5M0 9.500H12M8.500 0V7M6 4.500L8.500 7L11 4.500" stroke="#5e5e5e" stroke-width="1.500" fill="none"/></svg><svg style="left:32px;top:121px" width="12" height="11" viewBox="0 0 12 11"><path d="M3 0H9V3H3ZM0 3.500H12V8.500H9.500V6.500H2.500V8.500H0ZM3.500 7.500H8.500V11H3.500Z" fill="#5e5e5e"/></svg><svg style="left:33px;top:143px" width="10" height="12" viewBox="0 0 10 12"><path d="M3.500 0H6.500V1H10V2.500H0V1H3.500ZM1 3.500H9V12H1Z" fill="#5e5e5e"/></svg><span class="mono" style="left:60.500px;top:21.90px;color:#2a2a9c">/home/menglei/PycharmProjects/test/venv/bin/python /home/menglei/PycharmProjects/test/LearnPython/filetest.py</span>
<span class="mono" style="left:60.500px;top:34.90px;color:#1c1c1c">b'\xff\xd8\xff\xe0\x00\x10JFIF\x00\x01\x01\x01\x00H\x00H\x00\x00\xff\xdb\x00C\x00\x08\x06\x06\x07\x06\x05\x08\x07\x07\x07\t\t\x08\n\x0c\x14\r\x0c\x0b\x0b\x0c\x19\x12\x13</span>
<span class="mono" style="left:60.500px;top:60.90px;color:#333388">Process finished with exit code 0</span>
<div style="left:61px;top:166px;width:24px;height:9px;background:#e2e2e2"></div>
</div>
<div id="bbar" style="left:59px;top:634px;width:1141px;height:22px;background:#f2f2f2;border-top:1px solid #c4c4c4;border-bottom:1px solid #c4c4c4">
<div style="left:20px;top:0;width:65px;height:20px;background:#c6c6c6"></div><svg style="left:30px;top:6.500px" width="7" height="8" viewBox="0 0 7 8"><path d="M0 0L7 4L0 8Z" fill="#6e6e6e"/></svg><span class="t" style="left:43px;top:2.500px;font-size:10.300px;color:#262626"><span class="u">4</span>: Run</span><svg style="left:95px;top:5px" width="10" height="10" viewBox="0 0 13 13"><ellipse cx="6.500" cy="7.800" rx="3.600" ry="4.600" fill="#6e6e6e"/><path d="M3.800 3.600A2.700 2.700 0 0 1 9.200 3.600Z" fill="#6e6e6e"/><path d="M0 7.500H13M1 3.500L3.500 5.500M12 3.500L9.500 5.500M1 12L3.500 10M12 12L9.500 10" stroke="#6e6e6e" stroke-width="1.300"/></svg><span class="t" style="left:109px;top:2.500px;font-size:10.300px;color:#262626"><span class="u">5</span>: Debug</span><svg style="left:175px;top:6px" width="10" height="8" viewBox="0 0 10 8"><path d="M0 1H1.500M3 1H10M0 4H1.500M3 4H10M0 7H1.500M3 7H10" stroke="#6e6e6e" stroke-width="1.300"/></svg><span class="t" style="left:188px;top:2.500px;font-size:10.300px;color:#262626"><span class="u">6</span>: TODO</span><svg style="left:251px;top:5.500px" width="10" height="9" viewBox="0 0 10 9"><rect width="10" height="9" fill="#6e6e6e"/><path d="M2 2.500L4.500 4.500L2 6.500M5.500 6.500H8" stroke="#f2f2f2" stroke-width="1" fill="none"/></svg><span class="t" style="left:265px;top:2.500px;font-size:10.300px;color:#262626">Terminal</span><svg style="left:331px;top:4.500px;filter:grayscale(1) brightness(.8)" width="11" height="11" viewBox="0 0 12 12"><use href="#pylogo" width="12" height="12"/></svg><span class="t" style="left:346px;top:2.500px;font-size:10.300px;color:#262626">Python Console</span><div style="left:1047px;top:4.500px;width:11px;height:11px;border-radius:50%;background:#59a869"></div><span class="t" style="left:1047px;top:2.500px;width:11px;text-align:center;font-size:8px;color:#fff;font-weight:bold">2</span><span class="t" style="left:1062px;top:2.500px;font-size:10.100px;color:#262626">Event Log</span>
</div>
<div id="status" style="left:59px;top:656px;width:1141px;height:18px;background:#f2f2f2">
<svg style="left:8px;top:4px" width="11" height="11" viewBox="0 0 11 11"><path d="M.5 2.500V10.500H8.500" stroke="#8a8a8a" fill="none"/><rect x="2.500" y=".5" width="8" height="8" rx="1" fill="#f8f8f8" stroke="#8a8a8a"/></svg><span class="t" style="left:27px;top:2px;font-size:11.910px">Python Debugger Extension Available: Cython extension speeds up Python debugging // Install How does it w... (7 minutes ago)</span><span class="t" style="left:918px;top:2px">5:43</span><span class="t" style="left:953px;top:2px">LF</span><svg style="left:971px;top:5px" width="4" height="8" viewBox="0 0 4 8"><path d="M0 3H4L2 .5ZM0 5H4L2 7.500Z" fill="#5a5a5a"/></svg><span class="t" style="left:987px;top:2px;color:#9a9a9a">UTF-8</span><span class="t" style="left:1031px;top:2px">4 spaces</span><svg style="left:1087px;top:5px" width="4" height="8" viewBox="0 0 4 8"><path d="M0 3H4L2 .5ZM0 5H4L2 7.500Z" fill="#5a5a5a"/></svg><svg style="left:1101px;top:3px" width="10" height="11" viewBox="0 0 10 11"><rect x="2" y="5" width="8" height="6" fill="#6e6e6e"/><path d="M1 5V3Q1 .8 3 .8Q5 .8 5 3" stroke="#6e6e6e" stroke-width="1.300" fill="none"/></svg><svg style="left:1121px;top:2px" width="12" height="14" viewBox="0 0 12 14"><path d="M1 4H11M2.500 4V1.500H9.500V4" stroke="#8a8a8a" fill="none"/><circle cx="6" cy="7" r="3.500" fill="none" stroke="#8a8a8a"/><circle cx="4.600" cy="6.500" r=".7" fill="#8a8a8a"/><circle cx="7.400" cy="6.500" r=".7" fill="#8a8a8a"/><path d="M1.500 14V12Q1.500 10.500 3.500 10.500H8.500Q10.500 10.500 10.500 12V14" stroke="#8a8a8a" fill="none"/></svg>
</div>

</body></html>
